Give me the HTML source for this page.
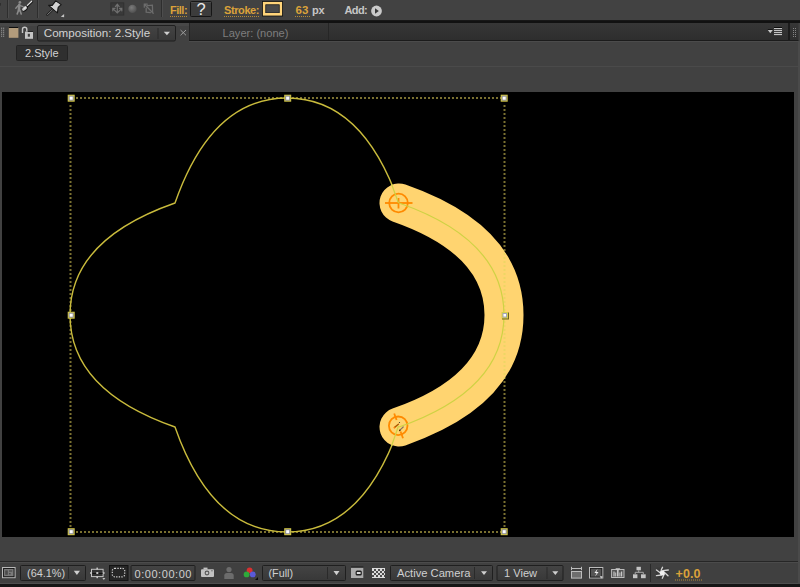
<!DOCTYPE html>
<html><head><meta charset="utf-8">
<style>
*{margin:0;padding:0}
html,body{width:800px;height:587px;overflow:hidden;background:#414141}
svg{position:absolute;left:0;top:0;display:block}
text{font-family:"Liberation Sans",sans-serif}
</style></head><body>
<svg width="800" height="587" viewBox="0 0 800 587">
<defs>
<linearGradient id="dd" x1="0" y1="0" x2="0" y2="1">
<stop offset="0" stop-color="#444444"/><stop offset="1" stop-color="#383838"/>
</linearGradient>
<linearGradient id="tabd" x1="0" y1="0" x2="0" y2="1">
<stop offset="0" stop-color="#363636"/><stop offset="1" stop-color="#2e2e2e"/>
</linearGradient>
</defs>
<!-- ===== backgrounds ===== -->
<rect x="0" y="0" width="800" height="20" fill="#424242"/>
<rect x="0" y="20" width="800" height="3" fill="#111111"/><rect x="0" y="20" width="800" height="1" fill="#171717"/>
<rect x="0" y="23" width="800" height="42" fill="#414141"/>
<rect x="0" y="23" width="189" height="3" fill="#474747"/>
<rect x="0" y="65" width="798" height="1" fill="#272727"/>
<rect x="0" y="65" width="800" height="496" fill="#414141"/>
<rect x="2" y="92" width="792" height="445" fill="#000"/>
<rect x="0" y="561" width="798" height="1" fill="#262626"/>
<rect x="0" y="562" width="800" height="22" fill="#404040"/>
<rect x="0" y="584" width="800" height="3" fill="#151515"/>
<rect x="0" y="66" width="798" height="1" fill="#4a4a4a"/>
<rect x="0" y="562" width="798" height="1" fill="#4b4b4b"/>
<rect x="0" y="583" width="798" height="1" fill="#4e4e4e"/>
<rect x="798" y="41" width="2" height="543" fill="#4a4a4a"/>

<!-- ===== toolbar ===== -->
<rect x="7" y="0" width="1" height="18" fill="#2e2e2e"/><rect x="8" y="0" width="1" height="18" fill="#4d4d4d"/>
<rect x="37" y="0" width="1" height="18" fill="#2e2e2e"/><rect x="38" y="0" width="1" height="18" fill="#4d4d4d"/>
<rect x="161" y="0" width="1" height="17" fill="#2e2e2e"/><rect x="162" y="0" width="1" height="17" fill="#4d4d4d"/>

<text x="170" y="13.6" font-size="11" font-weight="bold" fill="#dba23a" letter-spacing="-0.5">Fill:</text>
<text x="224" y="13.6" font-size="11" font-weight="bold" fill="#dba23a" letter-spacing="-0.4">Stroke:</text>
<text x="295.5" y="13.6" font-size="11.5" font-weight="bold" fill="#dba23a">63</text>
<text x="312" y="13.6" font-size="11" font-weight="bold" fill="#c6c6c6" letter-spacing="-0.2">px</text>
<text x="344.5" y="13.6" font-size="11" font-weight="bold" fill="#c6c6c6" letter-spacing="-0.6">Add:</text>
<g fill="#b4862e">
<path d="M170.5 15.5h17v1h-17z" fill="none"/>
</g>
<g stroke="#b58a35" stroke-width="1" stroke-dasharray="1 1">
<line x1="170" y1="16.5" x2="188" y2="16.5"/>
<line x1="224" y1="16.5" x2="259" y2="16.5"/>
<line x1="295" y1="16.5" x2="310" y2="16.5"/>
</g>

<!-- ===== tab row ===== -->
<rect x="37.5" y="25.5" width="138" height="15.5" rx="1.5" fill="url(#dd)" stroke="#1f1f1f" stroke-width="1"/>
<text x="43.8" y="37" font-size="11.6" fill="#d2d2d2">Composition: 2.Style</text>
<rect x="157.5" y="28" width="1" height="11" fill="#2a2a2a"/>
<rect x="189" y="23" width="599" height="17" fill="url(#tabd)"/>
<rect x="189" y="23" width="1" height="17" fill="#262626"/>
<rect x="328" y="23" width="1" height="17" fill="#262626"/>
<rect x="189" y="40" width="599" height="1" fill="#1b1b1b"/>
<rect x="189" y="41" width="609" height="1" fill="#4b4b4b"/>
<text x="222.5" y="37" font-size="11.1" fill="#7e7e7e">Layer: (none)</text>



<!-- ===== panel row ===== -->
<rect x="16.5" y="45.5" width="51" height="15" rx="1" fill="#2f2f2f" stroke="#242424" stroke-width="1"/>
<text x="25" y="57" font-size="11" fill="#d2d2d2">2.Style</text>

<!-- ===== canvas shape ===== -->
<g fill="none" stroke="#7a7030" stroke-width="2" stroke-dasharray="2 2">
<line x1="76" y1="98" x2="501" y2="98"/>
<line x1="76" y1="532" x2="501" y2="532"/>
<line x1="70.5" y1="105" x2="70.5" y2="528"/>
<line x1="504.5" y1="105" x2="504.5" y2="528"/>
</g>
<path d="M175.0,203.0 C193.0,151.4 225.0,98.0 287.0,98.0 C349.0,98.0 381.0,151.4 399.0,203.0 C450.6,221.0 504.0,253.0 504.0,315.0 C504.0,377.0 450.6,409.0 399.0,427.0 C381.0,478.6 349.0,532.0 287.0,532.0 C225.0,532.0 193.0,478.6 175.0,427.0 C123.4,409.0 70.0,377.0 70.0,315.0 C70.0,253.0 123.4,221.0 175.0,203.0 Z" fill="none" stroke="#c9bb3c" stroke-width="1.4"/>
<path d="M399.0,203.0 C450.6,221.0 504.0,253.0 504.0,315.0 C504.0,377.0 450.6,409.0 399.0,427.0" fill="none" stroke="#ffd470" stroke-width="39" stroke-linecap="round"/>
<mask id="sm" maskUnits="userSpaceOnUse" x="0" y="0" width="800" height="587"><path d="M399.0,203.0 C450.6,221.0 504.0,253.0 504.0,315.0 C504.0,377.0 450.6,409.0 399.0,427.0" fill="none" stroke="#fff" stroke-width="39" stroke-linecap="round"/></mask>
<line x1="504.5" y1="105" x2="504.5" y2="528" fill="none" stroke="#eed664" stroke-width="2" stroke-dasharray="2 2" mask="url(#sm)"/>
<g fill="none" stroke="#ff8a00" stroke-width="1.8">
<circle cx="398.5" cy="203" r="9.3"/>
<line x1="385" y1="203" x2="412.5" y2="203"/>
<line x1="398.5" y1="198" x2="398.5" y2="208.5"/>
<circle cx="398.2" cy="425.8" r="9.3"/>
<line x1="394.2" y1="413.5" x2="396.6" y2="420"/><line x1="400.6" y1="431.5" x2="403" y2="438.3"/>
</g>
<path d="M399.0,203.0 C450.6,221.0 504.0,253.0 504.0,315.0 C504.0,377.0 450.6,409.0 399.0,427.0" fill="none" stroke="#cfd244" stroke-width="1.2"/>
<path d="M391.5,184 L398.5,203 M398.5,426 L391.5,446" fill="none" stroke="#cfd244" stroke-width="1.2"/>
<g stroke-linecap="round">
<path d="M394.6 427.4 L398.4 424.2" stroke="#b05a00" stroke-width="1.4"/>
<circle cx="394.4" cy="427.6" r="0.9" fill="#ff7a00"/>
<circle cx="399.5" cy="422.5" r="0.6" fill="#3a3020"/>
<path d="M400.4 429.6 L403.2 427" stroke="#857560" stroke-width="1.2"/>
<circle cx="399.8" cy="430.4" r="0.8" fill="#4a2800"/>
</g>
<g id="h">
<rect x="67.7" y="94.7" width="7" height="7" fill="#d2c642"/>
<rect x="68.7" y="95.7" width="5" height="5" fill="#8e8e98"/>
<rect x="69.7" y="96.7" width="3" height="3" fill="#ffffff"/>
</g>
<use href="#h" x="216.5" y="0"/>
<use href="#h" x="433" y="0"/>
<use href="#h" x="0" y="217"/>
<use href="#h" x="0" y="433.5"/>
<use href="#h" x="216.5" y="433.5"/>
<use href="#h" x="433" y="433.5"/>
<g>
<rect x="502" y="312.5" width="7" height="7" fill="#6e6420"/>
<rect x="501.5" y="312" width="6.5" height="6.5" fill="#d8d04a"/>
<rect x="502.5" y="313" width="4.5" height="4.5" fill="#a4a4b8"/>
<rect x="503.5" y="314" width="2.5" height="2.5" fill="#ffffff"/>
</g>


<!-- ===== toolbar icons ===== -->
<rect x="0" y="3" width="1" height="2.6" fill="#2e2e2e"/>
<g fill="#8a8a8a" stroke="#8a8a8a" stroke-linecap="round">
<circle cx="19.9" cy="2.4" r="1.4" stroke="none"/>
<path d="M19.3 4.8 L18.9 10.3" stroke-width="2.6" fill="none"/>
<path d="M18.3 5.4 L15.8 8.2" stroke-width="1.4" fill="none"/>
<path d="M20.3 5.6 L23 6.6" stroke-width="1.4" fill="none"/>
<path d="M18.5 10.5 L17.2 13.9" stroke-width="1.6" fill="none"/>
<path d="M20 10.5 L21.2 13.9" stroke-width="1.6" fill="none"/>
</g>
<path d="M32.3 1.6 L26.8 7" stroke="#161616" stroke-width="1.8" stroke-linecap="round"/>
<path d="M31.7 1.2 L27.4 5.4" stroke="#e4e4e4" stroke-width="1.2" stroke-linecap="round"/>
<ellipse cx="24.9" cy="8.9" rx="3.3" ry="2.1" transform="rotate(-40 24.9 8.9)" fill="#141414"/>
<ellipse cx="24.5" cy="8.5" rx="2.9" ry="1.7" transform="rotate(-40 24.5 8.5)" fill="#c8c8c8"/>
<ellipse cx="24.9" cy="8" rx="1.6" ry="0.8" transform="rotate(-40 24.9 8)" fill="#e8e8e8"/>
<path d="M52.5 9.8 L47.3 14.8" stroke="#1a1a1a" stroke-width="2.2" stroke-linecap="round"/>
<path d="M52.5 9.8 L47.5 14.6" stroke="#8c8c8c" stroke-width="0.9" stroke-linecap="round"/>
<path d="M55.8 0.9 L61.2 4.6 L58.2 7.3 L57.4 12.9 L48.6 5.3 L52.2 5.4 Z" fill="#b8b8b8" stroke="#161616" stroke-width="1.1" stroke-linejoin="round"/>
<path d="M56 2 L59.8 4.6 L57.3 6.9 L56.5 11.2 L50.5 5.9 L52.8 6 Z" fill="#d2d2d2"/>
<path d="M60.8 16.8 L64.1 13.9 L64.1 17.2 Z" fill="#c4c4c4"/>

<rect x="110.8" y="2.8" width="13" height="12.3" fill="#393939" stroke="#303030" stroke-width="0.8"/>
<g stroke="#707070" stroke-width="1.2" fill="none" stroke-linecap="round">
<path d="M117.3 12.7 V4.6 M115.4 6.6 L117.3 4.3 L119.2 6.6"/>
<path d="M117.3 12.7 L112.8 8.6 M112.8 10.8 V8.4 H115"/>
<path d="M117.3 12.7 L121.8 8.6 M121.8 10.8 V8.4 H119.6"/>
</g>
<defs><radialGradient id="sph" cx="0.4" cy="0.35" r="0.7"><stop offset="0" stop-color="#7c7c7c"/><stop offset="1" stop-color="#4c4c4c"/></radialGradient></defs>
<circle cx="132.5" cy="8.9" r="4.2" fill="url(#sph)"/>
<g stroke="#6c6c6c" stroke-width="1.3" fill="none" stroke-linecap="round">
<path d="M144.4 4.2 L153.2 13.2 M144.3 7.2 V4.2 H147.3"/>
<path d="M147.5 5.6 L152.4 5.2 L152.6 12 M146.2 8.2 L146.2 12.2 L150.4 12.6"/>
</g>

<rect x="190.5" y="1.5" width="21" height="15" rx="1" fill="#3c3c3c" stroke="#161616" stroke-width="1"/>
<rect x="191" y="2" width="20" height="1" fill="#4a4a4a"/>
<text x="196.6" y="15" font-size="16.5" fill="#e8e8e8">?</text>

<rect x="262" y="1" width="21" height="15.5" fill="#141414"/>
<rect x="264.2" y="3.2" width="16.6" height="11.1" fill="none" stroke="#ffd47a" stroke-width="2.6"/>
<rect x="265.5" y="4.5" width="14" height="8.5" fill="#2a2a2a"/>
<rect x="266.2" y="5.2" width="12.6" height="7.1" fill="#4a4a4a"/>

<circle cx="376.5" cy="11" r="5.4" fill="#cacaca"/>
<path d="M375 8.3 L378.8 11 L375 13.7 Z" fill="#3a3a3a"/>

<!-- ===== tab row icons ===== -->
<g fill="#9a9a9a">
<rect x="1" y="27.7" width="1.2" height="1"/><rect x="3" y="27.7" width="1.2" height="1"/>
<rect x="1" y="29.7" width="1.2" height="1"/><rect x="3" y="29.7" width="1.2" height="1"/>
<rect x="1" y="31.7" width="1.2" height="1"/><rect x="3" y="31.7" width="1.2" height="1"/>
<rect x="1" y="33.7" width="1.2" height="1"/><rect x="3" y="33.7" width="1.2" height="1"/>
<rect x="1" y="35.7" width="1.2" height="1"/><rect x="3" y="35.7" width="1.2" height="1"/>
</g>
<rect x="8.8" y="27" width="9.6" height="10.8" fill="#b29b7b"/>
<rect x="8.8" y="27" width="9.6" height="1" fill="#0e0e0e"/>
<path d="M22.5 33 V29.2 Q22.5 27.3 24.7 27.3 Q26.8 27.3 26.8 29.2 V31.6" fill="none" stroke="#c6c6c6" stroke-width="1.4"/>
<rect x="25" y="31.6" width="8" height="7.2" fill="#c4c4c4"/>
<rect x="27.8" y="31.1" width="5.2" height="0.9" fill="#1e1e1e"/>
<rect x="27.8" y="33.8" width="2.1" height="2.9" fill="#3e3e3e"/>
<path d="M180.5 30 L186 35.3 M186 30 L180.5 35.3" stroke="#9c9c9c" stroke-width="1"/>
<path d="M767.8 30 H772.8 L770.3 33.2 Z" fill="#c8c8c8"/>
<rect x="767.8" y="29" width="5" height="1" fill="#151515"/>
<rect x="774" y="27" width="8" height="1" fill="#0c0c0c"/>
<g fill="#c4c4c4"><rect x="774" y="28" width="8" height="1.1"/><rect x="774" y="30" width="8" height="1.1"/><rect x="774" y="32" width="8" height="1.1"/><rect x="774" y="34" width="8" height="1.1"/></g>
<rect x="788" y="23" width="2" height="18" fill="#1c1c1c"/><rect x="790" y="23" width="8.5" height="17" fill="url(#tabd)"/><rect x="790" y="40" width="8.5" height="1" fill="#1b1b1b"/>
<g fill="#858585">
<rect x="793" y="28" width="1" height="1"/><rect x="795" y="28" width="1" height="1"/>
<rect x="793" y="30" width="1" height="1"/><rect x="795" y="30" width="1" height="1"/>
<rect x="793" y="32" width="1" height="1"/><rect x="795" y="32" width="1" height="1"/>
<rect x="793" y="34" width="1" height="1"/><rect x="795" y="34" width="1" height="1"/>
<rect x="793" y="36" width="1" height="1"/><rect x="795" y="36" width="1" height="1"/>
</g>

<!-- ===== bottom icons ===== -->
<rect x="2.5" y="567.5" width="12.6" height="10.2" fill="#7a7a7a" stroke="#b8b8b8" stroke-width="1"/>
<rect x="3.6" y="568.5" width="10.4" height="8.2" fill="none" stroke="#141414" stroke-width="0.9"/>
<rect x="5.2" y="570.4" width="2.6" height="4.4" fill="#4a4a4a"/>
<rect x="9" y="570.4" width="3.2" height="1.2" fill="#4a4a4a"/>
<rect x="9" y="573" width="1.6" height="1.4" fill="#4a4a4a"/>

<rect x="91.5" y="569.3" width="11.6" height="7.3" fill="#333" stroke="#c4c4c4" stroke-width="1"/>
<rect x="92.5" y="573" width="10" height="1" fill="#111"/>
<g fill="#c4c4c4"><rect x="96.4" y="567.6" width="1.6" height="2"/><rect x="96.4" y="576.2" width="1.6" height="2"/><rect x="90" y="572.2" width="1.6" height="1.6"/><rect x="103" y="572.2" width="1.6" height="1.6"/><rect x="96.3" y="572" width="2" height="2"/></g>
<path d="M102.4 578 H105.3 L103.85 580 Z" fill="#c4c4c4"/>

<rect x="109.5" y="565.5" width="18.5" height="15" fill="#262626" stroke="#121212" stroke-width="1"/>
<rect x="112.3" y="568.3" width="12.4" height="8.6" rx="2.5" fill="none" stroke="#d4d4d4" stroke-width="1.2" stroke-dasharray="1.3 1.3"/>

<rect x="201" y="569.3" width="13" height="7.7" rx="1" fill="#c2c2c2"/>
<rect x="203.5" y="567.6" width="4" height="2" fill="#c2c2c2"/>
<circle cx="207" cy="573" r="2.4" fill="#555"/>
<circle cx="207" cy="573" r="1.3" fill="#c2c2c2"/>
<rect x="211.3" y="570.3" width="1.3" height="1" fill="#555"/>

<circle cx="229" cy="569.6" r="2.6" fill="#6c6c6c"/>
<path d="M224.3 579 V575.6 Q224.3 573 227 573 H231 Q233.7 573 233.7 575.6 V579 Z" fill="#6c6c6c"/>

<circle cx="249.6" cy="570.3" r="2.9" fill="#d83030"/>
<circle cx="246.6" cy="574.4" r="2.9" fill="#2fa83a"/>
<circle cx="252.8" cy="574.4" r="2.9" fill="#5a5ad8"/>
<path d="M255 580 L258 577 V580 Z" fill="#0a0a0a"/>

<rect x="351" y="568" width="12.3" height="10" fill="#acacac"/>
<rect x="351" y="566" width="12.3" height="1" fill="#2e2e2e"/>
<rect x="355.6" y="570.5" width="6.2" height="5" rx="1.5" fill="#1e1e1e"/>
<rect x="356.8" y="572" width="3.8" height="2" fill="#dcdcdc"/>

<rect x="372" y="568" width="13" height="10" fill="#dcdcdc"/>
<g fill="#4e4e4e">
<rect x="374" y="569" width="2" height="2"/><rect x="378" y="569" width="2" height="2"/><rect x="382" y="569" width="2" height="2"/>
<rect x="372" y="571" width="2" height="2"/><rect x="376" y="571" width="2" height="2"/><rect x="380" y="571" width="2" height="2"/><rect x="384" y="571" width="1" height="2"/>
<rect x="374" y="573" width="2" height="2"/><rect x="378" y="573" width="2" height="2"/><rect x="382" y="573" width="2" height="2"/>
<rect x="372" y="575" width="2" height="2"/><rect x="376" y="575" width="2" height="2"/><rect x="380" y="575" width="2" height="2"/><rect x="384" y="575" width="1" height="2"/>
</g>
<rect x="351" y="566.2" width="0" height="0"/>

<g stroke="#bcbcbc" fill="none" stroke-width="1">
<path d="M571.5 568.5 H581.5 M571.5 566.8 V570.2 M581.5 566.8 V570.2"/>
<rect x="571.5" y="571.5" width="10" height="6.6" fill="#6e6e6e"/>
</g>

<rect x="589.5" y="567.5" width="13.3" height="10.5" fill="#555" stroke="#bcbcbc" stroke-width="1"/>
<rect x="590.5" y="568.5" width="11.3" height="8.5" fill="none" stroke="#1a1a1a" stroke-width="0.8"/>
<path d="M597.6 568.8 L594.4 573 H596.6 L595 576.4 L598.6 572 H596.4 Z" fill="#f2f2f2"/>
<path d="M599.8 576.3 H602.6 L601.2 578.4 Z" fill="#e0e0e0"/>

<rect x="611.6" y="569.5" width="12.4" height="8" fill="#555" stroke="#bcbcbc" stroke-width="1"/>
<path d="M615.4 568.2 H620.2 L618.6 570.6 V576.5 H617 V570.6 Z" fill="#c8c8c8"/>
<g fill="#c8c8c8"><rect x="613.4" y="571.5" width="1.2" height="5"/><rect x="621" y="571.5" width="1.2" height="5"/><rect x="615.2" y="572.5" width="1" height="4"/><rect x="619.4" y="572.5" width="1" height="4"/></g>

<g fill="#c4c4c4">
<rect x="636.5" y="566.8" width="4.4" height="3.5"/>
<rect x="633" y="574.3" width="4.4" height="3.9"/>
<rect x="641" y="574.3" width="4.7" height="3.9"/>
</g>
<path d="M638.7 570.3 V572.3 M635.2 574.3 V572.3 H643.3 V574.3" stroke="#a8a8a8" stroke-width="1" fill="none"/>

<rect x="656" y="567.5" width="13" height="11" rx="1.5" fill="#3a3a3a"/>
<g stroke="#d4d4d4" stroke-width="1.4" fill="none" stroke-linecap="round">
<path d="M656.5 570 L660.5 573"/>
<path d="M662.5 567.3 Q661 569.5 660.9 572"/>
<path d="M668.3 570 L662.8 570.6"/>
<path d="M668 575.8 L664.8 572.8"/>
<path d="M662.3 578.2 L664 574.5"/>
<path d="M656.5 575.6 L661.4 575"/>
</g>
<circle cx="662.4" cy="573" r="2.5" fill="#f0f0f0"/>

<!-- ===== bottom bar ===== -->
<rect x="20.5" y="565.5" width="65" height="15" rx="1" fill="url(#dd)" stroke="#1f1f1f"/>
<text x="27" y="577" font-size="10.9" fill="#d0d0d0">(64.1%)</text>
<rect x="68" y="567" width="1" height="12" fill="#2a2a2a"/>
<rect x="131" y="565.5" width="64" height="15" rx="1" fill="url(#dd)" stroke="#1f1f1f"/>
<text x="134.5" y="577.8" font-size="11" fill="#d0d0d0" letter-spacing="0.55">0:00:00:00</text>
<rect x="262.5" y="565.5" width="83" height="15" rx="1" fill="url(#dd)" stroke="#1f1f1f"/>
<text x="268.5" y="577" font-size="10.8" fill="#d0d0d0">(Full)</text>
<rect x="327" y="567" width="1" height="12" fill="#2a2a2a"/>
<rect x="390.5" y="565.5" width="102" height="15" rx="1" fill="url(#dd)" stroke="#1f1f1f"/>
<text x="397" y="577" font-size="11.2" fill="#d0d0d0">Active Camera</text>
<rect x="474" y="567" width="1" height="12" fill="#2a2a2a"/>
<rect x="497" y="565.5" width="66" height="15" rx="1" fill="url(#dd)" stroke="#1f1f1f"/>
<text x="504" y="577" font-size="11.1" fill="#d0d0d0">1 View</text>
<rect x="546.5" y="567" width="1" height="12" fill="#2a2a2a"/>
<rect x="650" y="564" width="1" height="18" fill="#2a2a2a"/>
<text x="675.5" y="578" font-size="12.5" font-weight="bold" fill="#dba23a" letter-spacing="0.1">+0.0</text>
<line x1="675" y1="580" x2="702" y2="580" stroke="#b58a35" stroke-width="1" stroke-dasharray="1 1"/>
<g fill="#cfcfcf">
<path d="M73.8 570.8h6.2l-3.1 4.2z"/>
<path d="M333.5 571h6l-3 4.2z"/>
<path d="M481 571.2h6l-3 3.8z"/>
<path d="M552.3 571.2h6l-3 3.8z"/>
<path d="M163.8 31.8h6.2l-3.1 3.4z"/>
</g>
</svg>
</body></html>
